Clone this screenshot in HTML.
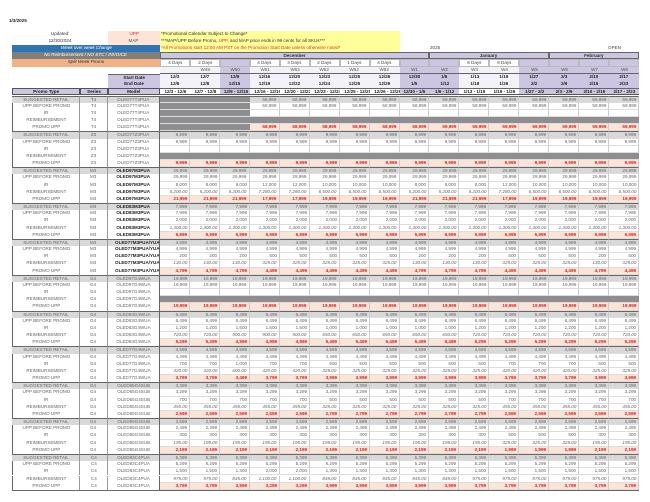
<!DOCTYPE html>
<html><head><meta charset="utf-8">
<style>
html,body{margin:0;padding:0;background:#fff;width:650px;height:502px;overflow:hidden}
body{font-family:"Liberation Sans",sans-serif;position:relative}
.c{position:absolute;box-sizing:border-box;font-size:6px;line-height:7.17px;white-space:nowrap;overflow:hidden;color:#444;text-align:center}
.c>span{display:inline-block;transform:scale(0.76);transform-origin:center center}
.r{text-align:right;padding-right:2px}
.r>span{transform-origin:right center}
.l{text-align:left}
.l>span{transform-origin:left center}
.b{font-weight:bold}
</style></head><body>
<div class="c b l" style="left:9px;top:18px;font-size:6px;color:#222"><span>1/3/2025</span></div>
<div id="g"></div>
<script>
var g=document.getElementById('g');
function cell(x,y,w,h,txt,st,cls){var d=document.createElement('div');d.className='c '+(cls||'');d.style.left=x+'px';d.style.top=y+'px';d.style.width=w+'px';d.style.height=h+'px';d.style.lineHeight=h+'px';if(st)d.style.cssText+=st;d.innerHTML=txt?'<span>'+txt+'</span>':'';g.appendChild(d);}
var H=7.17;function ky(k){return 30.7+H*k;}function ry(r){return 95.5+H*r;}
function cx(i){return 160+29.94*i;}var CW=29.94;
cell(12,ky(0),96,H,'Updated:','color:#333');
cell(12,ky(1),96,H,'12/30/2024','color:#333');
cell(108,ky(0),52,H,'UPP','background:#fce4d6;color:#e03030');
cell(108,ky(1),52,H,'MAP','background:#fce4d6;color:#555');
cell(160,ky(0),149,H,'*Promotional Calendar Subject to Change*','background:#ffff99;color:#333;padding-left:1px','l');
cell(309,ky(0),91,H,'','background:#ffff99');
cell(160,ky(1),240,H,'***MAP/UPP Before Promo, <span style="color:#e03030">UPP</span>, and MAP price ends in 99 cents for all SKUs***','background:#ffff99;color:#333;padding-left:1px','l');
cell(160,ky(2),240,H,'*All Promotions start 12:00 AM PST on the Promotion Start Date unless otherwise noted*','background:#ffff99;color:#e03030;padding-left:1px','l');
cell(12,ky(2),148,H,'Week over week Change','background:#2e75b6;color:#fff;font-style:italic');
cell(12,ky(3),148,H,'No Reimbursement / NO STC / INVOICE','background:#7f7f7f;color:#fff;font-style:italic');
cell(12,ky(4),148,H,'Split Week Promo','background:#f4b183;color:#333;font-style:italic');
cell(430,ky(2),30,H,'2025','color:#444','l');
cell(600,ky(2),30,H,'OPEN','color:#444');
cell(160,ky(3),269,H,'December','background:#ccc6e2;color:#333;border:0.6px solid #666','b');
cell(429,ky(3),120,H,'January','background:#ccc6e2;color:#333;border:0.6px solid #666','b');
cell(549,ky(3),90,H,'February','background:#ccc6e2;color:#333;border:0.6px solid #666','b');
var lav=[2,8,9,12,13,14,15];
var days=['4 Days','2 Days','','4 Days','3 Days','2 Days','1 Days','4 Days','','','6 Days','8 Days','','','',''];
var wk=['','W49','W50','W51','W52','W52','W52','W52','W1','W2','W3','W4','W5','W6','W7','W8'];
var sd=['12/3','12/7','12/9','12/16','12/20','12/23','12/25','12/26','12/30','1/6','1/13','1/19','1/27','2/3','2/10','2/17'];
var ed=['12/6','12/8','12/15','12/19','12/22','12/24','12/25','12/29','1/5','1/12','1/18','1/26','2/2','2/9','2/16','2/23'];
var rg=['12/3 - 12/6','12/7 - 12/8','12/9 - 12/15','12/16 - 12/19','12/20 - 12/22','12/23 - 12/24','12/25 - 12/25','12/26 - 12/29','12/30 - 1/5','1/6 - 1/12','1/13 - 1/19','1/19 - 1/26','1/27 - 2/2','2/3 - 2/9','2/10 - 2/16','2/17 - 2/23'];
for(var i=0;i<16;i++){var L=lav.indexOf(i)>=0;var x=cx(i);
 cell(x,ky(4),CW,H,days[i],'background:'+(L?'#ccc6e2':'#fff')+';border:0.4px solid #bbb;color:#444');
 cell(x,ky(5),CW,H,wk[i],'background:'+(L?'#ccc6e2':'#f4f2f9')+';border-bottom:0.6px solid #666;color:#555');
 cell(x,ky(6),CW,H,sd[i],'background:'+(L?'#ccc6e2':'#f4f2f9')+';color:#222','b');
 cell(x,ky(7),CW,H,ed[i],'background:'+(L?'#ccc6e2':'#f4f2f9')+';color:#222','b');
 cell(x,ky(8),CW,H,rg[i],'background:'+(L?'#ccc6e2':'#fff')+';color:#222;border-top:0.6px solid #666;border-bottom:0.8px solid #555','b');
}
cell(108,ky(6),52,H,'Start Date','background:#ccc6e2;color:#222;border-top:0.6px solid #666','b');
cell(108,ky(7),52,H,'End Date','background:#ccc6e2;color:#222','b');
cell(12,ky(8),68,H,'Promo Type','background:#ccc6e2;color:#222;border:0.6px solid #555','b');
cell(80,ky(8),28,H,'Series','background:#ccc6e2;color:#222;border:0.6px solid #555','b');
cell(108,ky(8),52,H,'Model','background:#ccc6e2;color:#222;border:0.6px solid #555','b');
function rep(v,n){var a=[];for(var i=0;i<n;i++)a.push(v);return a;}
var types=['SUGGESTED RETAIL','UPP BEFORE PROMO','IR','REIMBURSEMENT','PROMO UPP'];
var D='#';
var groups=[
 {s:'T4',m:'OLED77T4PUA',v:[
  [D,D,D].concat(rep('58,999',6),rep('59,999',7)),
  [D,D,D].concat(rep('58,999',6),rep('59,999',7)),
  [D,D,D].concat(rep('',13)),
  rep(D,16),
  [D,D,D].concat(rep('58,999',6),rep('59,999',7))]},
 {s:'Z3',m:'OLED77Z3PUA',v:[rep('9,999',16),rep('9,999',16),rep('',16),rep(D,16),rep('9,999',16)]},
 {s:'M3',m:'OLED97M3PUA',bm:1,v:[rep('29,999',16),rep('29,999',16),
  ['8,000','8,000','8,000','12,000','12,000','10,000','10,000','10,000','8,000','8,000','8,000','12,000','10,000','10,000','10,000','10,000'],
  ['5,200.00','5,200.00','5,200.00','7,280.00','7,280.00','6,500.00','6,500.00','6,500.00','5,200.00','5,200.00','5,200.00','7,280.00','6,500.00','6,500.00','6,500.00','6,500.00'],
  ['21,999','21,999','21,999','17,999','17,999','19,999','19,999','19,999','21,999','21,999','21,999','17,999','19,999','19,999','19,999','19,999']]},
 {s:'M3',m:'OLED83M3PUA',bm:1,v:[rep('7,999',16),rep('7,999',16),rep('2,000',16),rep('1,300.00',16),rep('5,999',16)]},
 {s:'M3',m:'OLED77M3PUA/YUA',bm:1,v:[rep('4,999',16),rep('4,999',16),
  ['200','200','200','500','500','500','500','500','200','200','200','500','500','500','200','500'],
  ['130.00','130.00','130.00','325.00','325.00','325.00','325.00','325.00','130.00','130.00','130.00','325.00','325.00','325.00','130.00','325.00'],
  ['4,799','4,799','4,799','4,499','4,499','4,499','4,499','4,499','4,799','4,799','4,799','4,499','4,499','4,499','4,799','4,499']]},
 {s:'G4',m:'OLED97G4WUA',v:[rep('19,999',16),rep('19,999',16),rep('',16),rep(D,16),rep('19,999',16)]},
 {s:'G4',m:'OLED83G4WUA',v:[rep('6,499',16),rep('6,499',16),
  ['1,200','1,200','1,500','1,500','1,500','1,000','1,000','1,000','1,000','1,000','1,200','1,200','1,200','1,200','1,200','1,200'],
  ['720.00','720.00','900.00','900.00','900.00','650.00','650.00','650.00','650.00','650.00','720.00','720.00','720.00','720.00','720.00','720.00'],
  ['5,299','5,299','4,999','4,999','4,999','5,499','5,499','5,499','5,499','5,499','5,299','5,299','5,299','5,299','5,299','5,299']]},
 {s:'G4',m:'OLED77G4WUA',v:[rep('4,599',16),rep('4,499',16),
  ['700','700','1,000','700','700','500','500','500','500','500','500','700','700','700','500','500'],
  ['420.00','420.00','600.00','420.00','420.00','325.00','325.00','325.00','325.00','325.00','325.00','420.00','420.00','420.00','325.00','325.00'],
  ['3,799','3,799','3,499','3,799','3,799','3,999','3,999','3,999','3,999','3,999','3,999','3,799','3,799','3,799','3,999','3,999']]},
 {s:'G4',m:'OLED65G4SUB',v:[rep('3,399',16),rep('3,299',16),
  ['700','700','700','700','700','500','500','500','500','500','500','700','700','700','700','700'],
  ['455.00','455.00','455.00','455.00','455.00','325.00','325.00','325.00','325.00','325.00','325.00','455.00','455.00','455.00','455.00','455.00'],
  ['2,599','2,599','2,599','2,599','2,599','2,799','2,799','2,799','2,799','2,799','2,799','2,599','2,599','2,599','2,599','2,599']]},
 {s:'G4',m:'OLED55G4SUB',v:[rep('2,599',16),rep('2,499',16),
  ['300','300','300','300','300','300','300','300','300','300','300','500','500','500','300','300'],
  ['195.00','195.00','195.00','195.00','195.00','195.00','195.00','195.00','195.00','195.00','195.00','325.00','325.00','325.00','195.00','195.00'],
  ['2,199','2,199','2,199','2,199','2,199','2,199','2,199','2,199','2,199','2,199','2,199','1,999','1,999','1,999','2,199','2,199']]},
 {s:'C4',m:'OLED83C4PUA',v:[rep('5,399',16),rep('5,299',16),
  ['1,500','1,500','1,300','2,000','2,000','1,300','1,300','1,300','1,300','1,300','1,500','1,500','1,500','1,500','1,500','1,500'],
  ['975.00','975.00','845.00','1,100.00','1,100.00','845.00','845.00','845.00','845.00','845.00','975.00','975.00','975.00','975.00','975.00','975.00'],
  ['3,799','3,799','3,999','3,299','3,299','3,999','3,999','3,999','3,999','3,999','3,799','3,799','3,799','3,799','3,799','3,799']]}
];
var r=0;
groups.forEach(function(G){
 for(var t=0;t<5;t++){
  var y=ry(r);var bg=t==0?'#d9d9d9':(t==4?'#fce4d6':'#fff');
  var top=t==0?'border-top:0.8px solid #666;':'';
  var lb=t==0?'':'border-left:0.8px solid #666;';
  cell(12,y,68,H,types[t],'background:'+(t==0?'#d9d9d9':'#fff')+';color:#666;'+top+lb+'border-right:0.5px solid #999');
  cell(80,y,28,H,G.s,'background:'+(t==0?'#d9d9d9':'#fff')+';color:#666;'+top+'border-right:0.5px solid #999');
  cell(108,y,52,H,G.m,'background:'+(t==0?'#d9d9d9':'#fff')+';color:'+(G.bm?'#222':'#666')+';'+top+'border-right:0.8px solid #666',G.bm?'b':'');
  for(var i=0;i<16;i++){
   var v=G.v[t][i];var st='border-right:0.4px solid #ccc;border-bottom:0.4px solid #ddd;'+top;
   if(v===D){st+='background:#8e8e90;border-right:none;';v='';}
   else st+='background:'+bg+';color:'+(t==4?'#e02020':'#666')+';'+(t==3?'font-style:italic;':'');
   cell(cx(i),y,CW,H,v,st,'r'+(t==4?' b':''));
  }
  r++;
 }
});
cell(12,ry(r),627,0.8,'','background:#666');
</script>
</body></html>
